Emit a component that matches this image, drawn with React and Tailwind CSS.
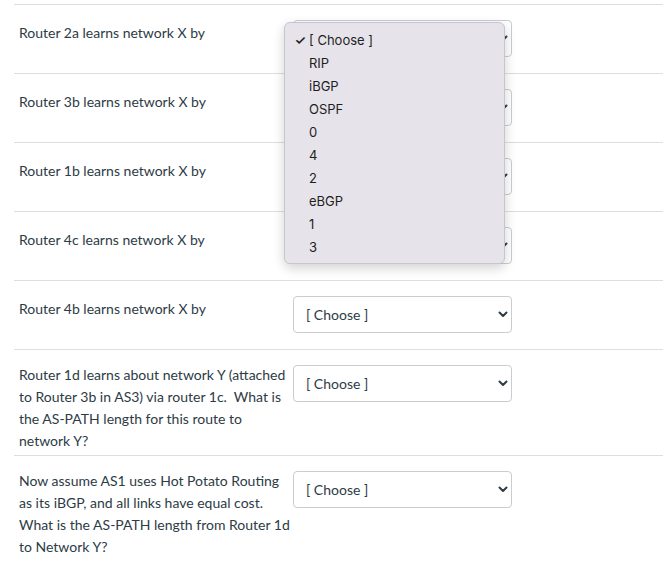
import React from "react";

const rows = [
  { text: "Router 2a learns network X by", multi: false },
  { text: "Router 3b learns network X by", multi: false },
  { text: "Router 1b learns network X by", multi: false },
  { text: "Router 4c learns network X by", multi: false },
  { text: "Router 4b learns network X by", multi: false },
  {
    text: "Router 1d learns about network Y (attached to Router 3b in AS3) via router 1c.\u00a0 What is the AS-PATH length for this route to network Y?",
    multi: true,
  },
  {
    text: "Now assume AS1 uses Hot Potato Routing as its iBGP, and all links have equal cost. What is the AS-PATH length from Router 1d to Network Y?",
    multi: true,
  },
];

const options = ["RIP", "iBGP", "OSPF", "0", "4", "2", "eBGP", "1", "3"];

const Chevron = () => (
  <svg width="10" height="7" viewBox="0 0 10 7" className="shrink-0">
    <path d="M1.5 1.5 L5 5 L8.5 1.5" fill="none" stroke="#2d3b45" strokeWidth="2" strokeLinecap="round" strokeLinejoin="round" />
  </svg>
);

const FakeSelect = () => (
  <div className="mt-[15px] w-[219px] h-[37px] shrink-0 rounded-[4px] border border-[#c7cdd1] bg-white flex items-center justify-between pl-[12px] pr-[3px] text-[14px] text-[#2d3b45]">
    <span>[ Choose ]</span>
    <Chevron />
  </div>
);

const App = () => {
  return (
    <div
      className="relative w-[663px] h-[575px] bg-white overflow-hidden pt-[4px] pl-[14px] text-[#2d3b45]"
      style={{ fontFamily: "Lato, 'Noto Sans', sans-serif" }}
    >
      {rows.map((row, i) => (
        <div key={i} className={`flex border-t border-[#dcdfe2] ${row.multi ? "pb-[3px]" : "pb-[16px]"}`}>
          <div
            className={`w-[279px] shrink-0 pl-[5px] text-[14px] leading-[22px] ${row.multi ? "pt-[14px]" : "pt-[17px]"}`}
          >
            {row.text}
          </div>
          <FakeSelect />
        </div>
      ))}

      {/* native dropdown menu open over the first selects */}
      <div
        className="absolute left-[284px] top-[22px] w-[221px] h-[242px] rounded-[6px] border border-[#c9c5cc] bg-[#e7e3ea] shadow-[0_4px_12px_rgba(0,0,0,0.18)] pt-[6px] text-[13px] text-[#1e1e1e]"
        style={{ fontFamily: "Inter, 'Liberation Sans', sans-serif" }}
      >
        <div className="h-[23px] flex items-center">
          <span className="w-[24px] text-right pr-[3px] text-[13px] font-semibold">✓</span>
          <span>[ Choose ]</span>
        </div>
        {options.map((o) => (
          <div key={o} className="h-[23px] flex items-center pl-[24px]">
            {o}
          </div>
        ))}
      </div>
    </div>
  );
};

export default App;
